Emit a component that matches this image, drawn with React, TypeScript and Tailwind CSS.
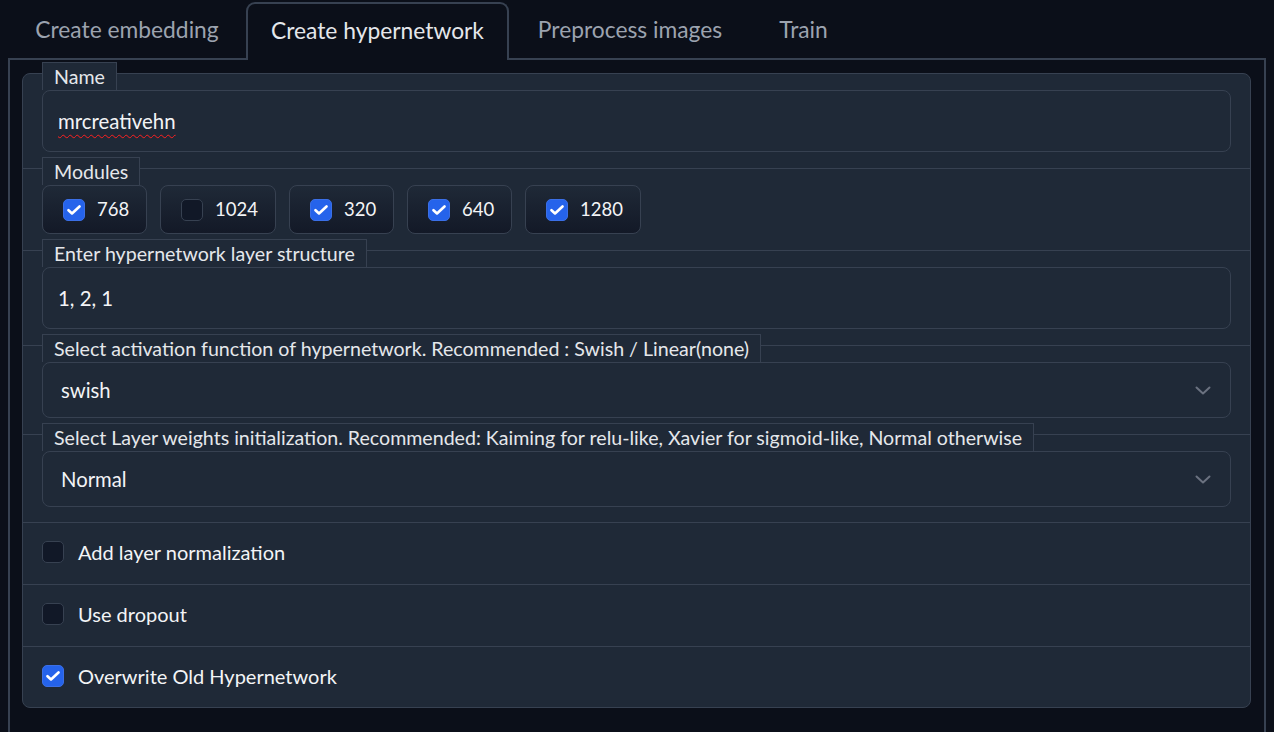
import React from "react";

function CheckBox({ checked }: { checked: boolean }) {
  return (
    <span
      className={
        checked
          ? "flex h-[22px] w-[22px] shrink-0 items-center justify-center rounded-[5px] border border-[#3b6fe6] bg-[#2563eb]"
          : "flex h-[22px] w-[22px] shrink-0 items-center justify-center rounded-[5px] border border-[#374151] bg-[#111827]"
      }
    >
      {checked && (
        <svg viewBox="0 0 14 10" className="h-[10px] w-[14px]">
          <path
            d="M1.5 5.2 L5 8.5 L12.5 1.5"
            fill="none"
            stroke="white"
            strokeWidth="2.6"
            strokeLinecap="round"
            strokeLinejoin="round"
          />
        </svg>
      )}
    </span>
  );
}

function BlockLabel({ children }: { children: React.ReactNode }) {
  return (
    <div className="relative -mt-[12px] flex h-[28px] w-fit items-center border border-b-0 border-[#374151] bg-[#1f2937] px-[11px] text-[19.6px] leading-none text-[#e5e7eb]">
      {children}
    </div>
  );
}

function Chevron() {
  return (
    <svg viewBox="0 0 16 9" className="h-[9px] w-[16px]">
      <path
        d="M1.5 1.5 L8 7.5 L14.5 1.5"
        fill="none"
        stroke="#6b7280"
        strokeWidth="2"
        strokeLinecap="round"
        strokeLinejoin="round"
      />
    </svg>
  );
}

function SelectBox({ value }: { value: string }) {
  return (
    <div className="flex h-[56px] items-center justify-between rounded-[8px] border border-[#374151] bg-[#1f2937] pl-[18px] pr-[19px] text-[20.3px] text-[#f3f4f6]">
      <span>{value}</span>
      <Chevron />
    </div>
  );
}

const modules = [
  { n: "768", c: true, w: "w-[105px]" },
  { n: "1024", c: false, w: "w-[116px]" },
  { n: "320", c: true, w: "w-[105px]" },
  { n: "640", c: true, w: "w-[105px]" },
  { n: "1280", c: true, w: "w-[116px]" },
];

const tabs = [
  { t: "Create embedding", w: "w-[238px]", active: false },
  { t: "Create hypernetwork", w: "w-[263px]", active: true },
  { t: "Preprocess images", w: "w-[242px]", active: false },
  { t: "Train", w: "w-[105px]", active: false },
];

export default function App() {
  return (
    <div className="h-[732px] w-full overflow-hidden bg-[#0b0f19] font-['Lato','Noto_Sans',sans-serif]">
      <div className="flex px-2 pt-[2px]">
        {tabs.map((tab) => (
          <div
            key={tab.t}
            className={
              tab.active
                ? `relative z-10 -mb-[2px] flex h-[58px] ${tab.w} items-center justify-center rounded-t-[9px] border-2 border-b-0 border-[#374151] bg-[#0b0f19] pb-[4px] text-[22.8px] text-[#e5e7eb]`
                : `-mb-[2px] flex h-[58px] ${tab.w} items-center justify-center pb-[3px] text-[22.8px] text-[#9ca3af]`
            }
          >
            {tab.t}
          </div>
        ))}
      </div>

      <div className="mx-2 border-2 border-[#374151] pb-10 pl-3 pr-[13px] pt-[13px]">
        <div className="rounded-[8px] border border-[#374151] bg-[#1f2937]">
          {/* Name */}
          <div className="px-[19px] pb-4">
            <BlockLabel>Name</BlockLabel>
            <div className="flex h-[62px] items-center rounded-[8px] border border-[#374151] bg-[#1f2937] pl-[15px] text-[20.4px] text-[#f3f4f6]">
              <span className="underline decoration-[#ff2020] decoration-wavy decoration-1 underline-offset-[5px]">
                mrcreativehn
              </span>
            </div>
          </div>

          {/* Modules */}
          <div className="border-t border-[#374151] px-[19px] pb-4">
            <BlockLabel>Modules</BlockLabel>
            <div className="flex gap-[13px]">
              {modules.map((m) => (
                <div
                  key={m.n}
                  className={`flex h-[49px] ${m.w} items-center gap-[12px] rounded-[8px] border border-[#374151] bg-linear-to-t from-[#131927] to-[#1f2937] pl-5 text-[18.5px] text-[#f3f4f6]`}
                >
                  <CheckBox checked={m.c} />
                  <span>{m.n}</span>
                </div>
              ))}
            </div>
          </div>

          {/* Layer structure */}
          <div className="border-t border-[#374151] px-[19px] pb-4">
            <BlockLabel>Enter hypernetwork layer structure</BlockLabel>
            <div className="flex h-[62px] items-center rounded-[8px] border border-[#374151] bg-[#1f2937] pl-[15px] text-[20.4px] text-[#f3f4f6]">
              1, 2, 1
            </div>
          </div>

          {/* Activation */}
          <div className="border-t border-[#374151] px-[19px] pb-4">
            <BlockLabel>
              Select activation function of hypernetwork. Recommended : Swish / Linear(none)
            </BlockLabel>
            <SelectBox value="swish" />
          </div>

          {/* Weights init */}
          <div className="border-t border-[#374151] px-[19px] pb-[15px]">
            <BlockLabel>
              Select Layer weights initialization. Recommended: Kaiming for relu-like, Xavier for
              sigmoid-like, Normal otherwise
            </BlockLabel>
            <SelectBox value="Normal" />
          </div>

          {/* Checkbox rows */}
          <div className="flex h-[62px] items-center gap-[14px] border-t border-[#374151] px-[19px] pb-[3px] text-[20px] text-[#f3f4f6]">
            <CheckBox checked={false} />
            <span>Add layer normalization</span>
          </div>
          <div className="flex h-[62px] items-center gap-[14px] border-t border-[#374151] px-[19px] pb-[3px] text-[20px] text-[#f3f4f6]">
            <CheckBox checked={false} />
            <span>Use dropout</span>
          </div>
          <div className="flex h-[61px] items-center gap-[14px] border-t border-[#374151] px-[19px] pb-[3px] text-[20px] text-[#f3f4f6]">
            <CheckBox checked={true} />
            <span>Overwrite Old Hypernetwork</span>
          </div>
        </div>
      </div>
    </div>
  );
}
